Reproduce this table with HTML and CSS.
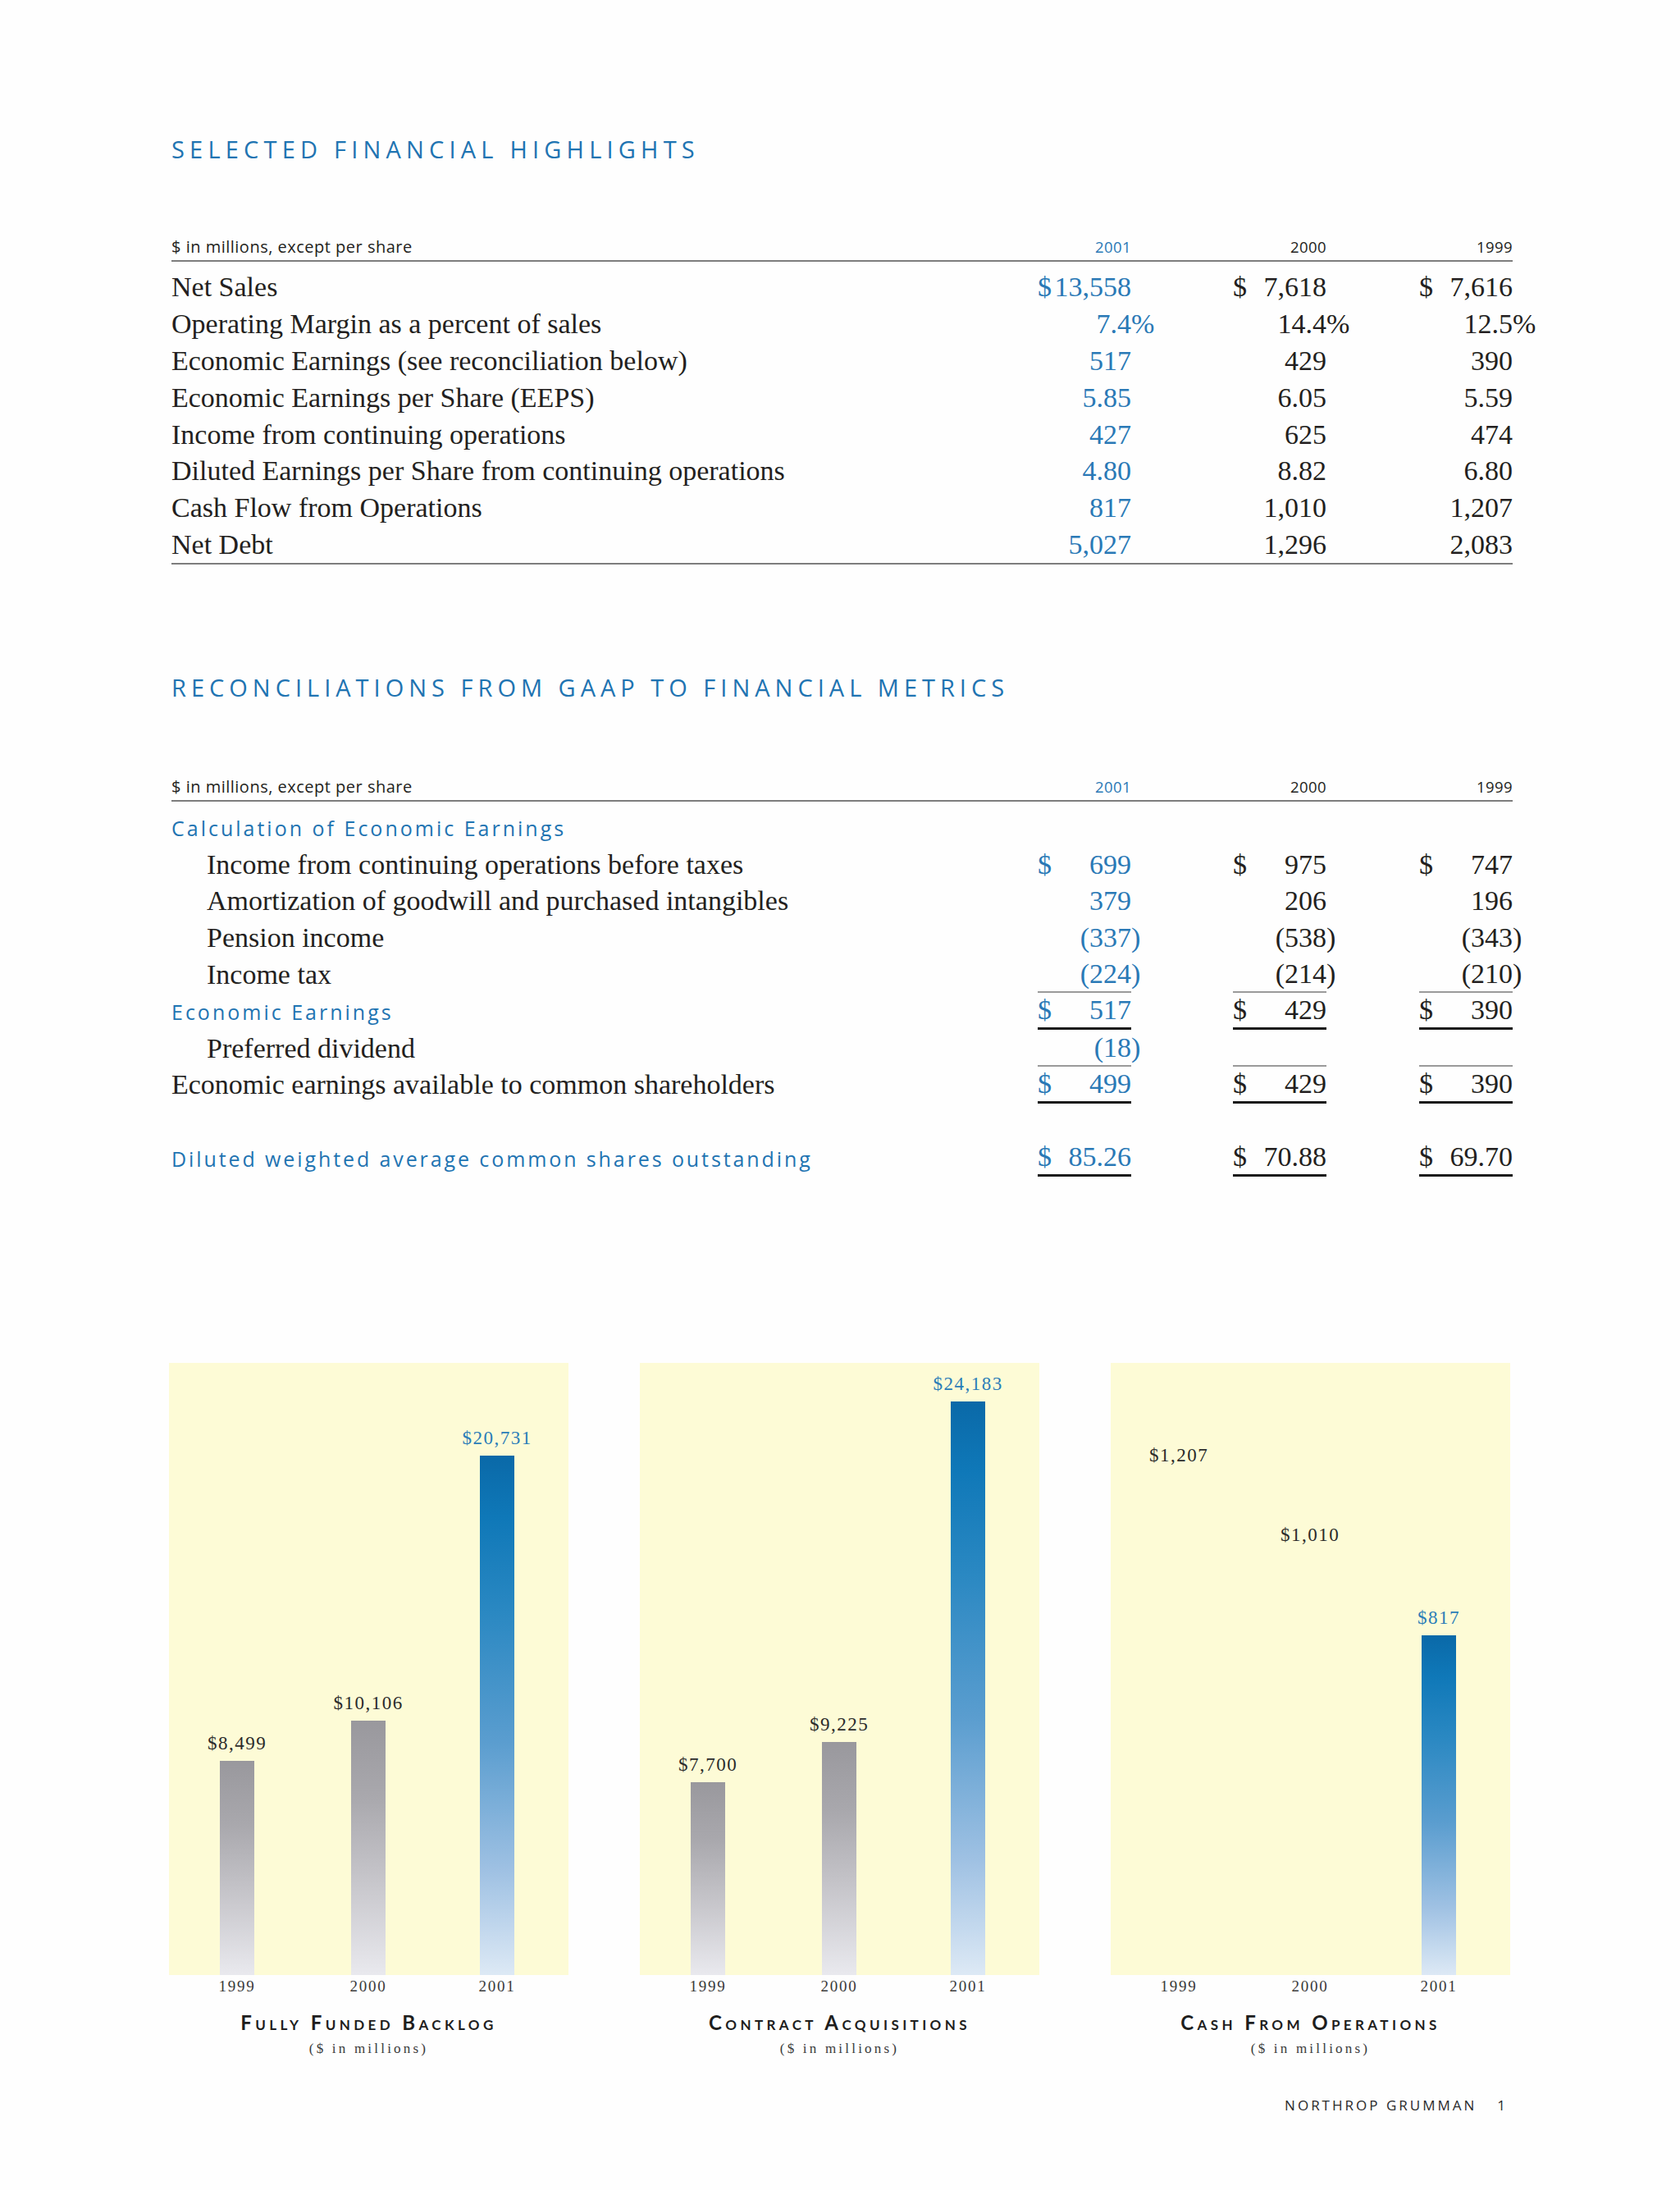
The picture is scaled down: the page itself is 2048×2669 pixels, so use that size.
FILE: index.html
```html
<!DOCTYPE html>
<html lang="en">
<head>
<meta charset="utf-8">
<title>Selected Financial Highlights</title>
<link rel="stylesheet" href="styles.css">
</head>
<body>
<main class="page">
  <h2 class="section-title t1">Selected Financial Highlights</h2>
  <div class="table tbl1">
    <div class="row head">
      <div class="label">$ in millions, except per share</div>
      <div class="val v1 cur">2001</div>
      <div class="val v2">2000</div>
      <div class="val v3">1999</div>
    </div>
    <div class="row">
      <div class="label">Net Sales</div>
      <div class="val v1 cur"><span class="d">$</span><span class="n">13,558</span></div>
      <div class="val v2"><span class="d">$</span><span class="n">7,618</span></div>
      <div class="val v3"><span class="d">$</span><span class="n">7,616</span></div>
    </div>
    <div class="row">
      <div class="label">Operating Margin as a percent of sales</div>
      <div class="val v1 cur"><span class="n">7.4<span class="hang">%</span></span></div>
      <div class="val v2"><span class="n">14.4<span class="hang">%</span></span></div>
      <div class="val v3"><span class="n">12.5<span class="hang">%</span></span></div>
    </div>
    <div class="row">
      <div class="label">Economic Earnings (see reconciliation below)</div>
      <div class="val v1 cur"><span class="n">517</span></div>
      <div class="val v2"><span class="n">429</span></div>
      <div class="val v3"><span class="n">390</span></div>
    </div>
    <div class="row">
      <div class="label">Economic Earnings per Share (EEPS)</div>
      <div class="val v1 cur"><span class="n">5.85</span></div>
      <div class="val v2"><span class="n">6.05</span></div>
      <div class="val v3"><span class="n">5.59</span></div>
    </div>
    <div class="row">
      <div class="label">Income from continuing operations</div>
      <div class="val v1 cur"><span class="n">427</span></div>
      <div class="val v2"><span class="n">625</span></div>
      <div class="val v3"><span class="n">474</span></div>
    </div>
    <div class="row">
      <div class="label">Diluted Earnings per Share from continuing operations</div>
      <div class="val v1 cur"><span class="n">4.80</span></div>
      <div class="val v2"><span class="n">8.82</span></div>
      <div class="val v3"><span class="n">6.80</span></div>
    </div>
    <div class="row">
      <div class="label">Cash Flow from Operations</div>
      <div class="val v1 cur"><span class="n">817</span></div>
      <div class="val v2"><span class="n">1,010</span></div>
      <div class="val v3"><span class="n">1,207</span></div>
    </div>
    <div class="row">
      <div class="label">Net Debt</div>
      <div class="val v1 cur"><span class="n">5,027</span></div>
      <div class="val v2"><span class="n">1,296</span></div>
      <div class="val v3"><span class="n">2,083</span></div>
    </div>
  </div>

  <h2 class="section-title t2">Reconciliations from GAAP to Financial Metrics</h2>
  <div class="table tbl2">
    <div class="row head">
      <div class="label">$ in millions, except per share</div>
      <div class="val v1 cur">2001</div>
      <div class="val v2">2000</div>
      <div class="val v3">1999</div>
    </div>
    <div class="row">
      <div class="label sans">Calculation of Economic Earnings</div>
    </div>
    <div class="row">
      <div class="label indent">Income from continuing operations before taxes</div>
      <div class="val v1 cur"><span class="d">$</span><span class="n">699</span></div>
      <div class="val v2"><span class="d">$</span><span class="n">975</span></div>
      <div class="val v3"><span class="d">$</span><span class="n">747</span></div>
    </div>
    <div class="row">
      <div class="label indent">Amortization of goodwill and purchased intangibles</div>
      <div class="val v1 cur"><span class="n">379</span></div>
      <div class="val v2"><span class="n">206</span></div>
      <div class="val v3"><span class="n">196</span></div>
    </div>
    <div class="row">
      <div class="label indent">Pension income</div>
      <div class="val v1 cur"><span class="n">(337<span class="hang">)</span></span></div>
      <div class="val v2"><span class="n">(538<span class="hang">)</span></span></div>
      <div class="val v3"><span class="n">(343<span class="hang">)</span></span></div>
    </div>
    <div class="row">
      <div class="label indent">Income tax</div>
      <div class="val v1 cur thin"><span class="n">(224<span class="hang">)</span></span></div>
      <div class="val v2 thin"><span class="n">(214<span class="hang">)</span></span></div>
      <div class="val v3 thin"><span class="n">(210<span class="hang">)</span></span></div>
    </div>
    <div class="row">
      <div class="label sans">Economic Earnings</div>
      <div class="val v1 cur thick"><span class="d">$</span><span class="n">517</span></div>
      <div class="val v2 thick"><span class="d">$</span><span class="n">429</span></div>
      <div class="val v3 thick"><span class="d">$</span><span class="n">390</span></div>
    </div>
    <div class="row">
      <div class="label indent">Preferred dividend</div>
      <div class="val v1 cur thin"><span class="n">(18<span class="hang">)</span></span></div>
      <div class="val v2 thin"></div>
      <div class="val v3 thin"></div>
    </div>
    <div class="row">
      <div class="label">Economic earnings available to common shareholders</div>
      <div class="val v1 cur thick"><span class="d">$</span><span class="n">499</span></div>
      <div class="val v2 thick"><span class="d">$</span><span class="n">429</span></div>
      <div class="val v3 thick"><span class="d">$</span><span class="n">390</span></div>
    </div>
    <div class="row spacer"></div>
    <div class="row">
      <div class="label sans wide">Diluted weighted average common shares outstanding</div>
      <div class="val v1 cur thick"><span class="d">$</span><span class="n">85.26</span></div>
      <div class="val v2 thick"><span class="d">$</span><span class="n">70.88</span></div>
      <div class="val v3 thick"><span class="d">$</span><span class="n">69.70</span></div>
    </div>
  </div>

  <section class="charts">
    <figure class="chart">
      <div class="panel">
        <div class="slot"><span class="amt">$8,499</span><div class="bar gray" style="height:261px"></div></div>
        <div class="slot"><span class="amt">$10,106</span><div class="bar gray" style="height:310px"></div></div>
        <div class="slot"><span class="amt cur">$20,731</span><div class="bar blue" style="height:633px"></div></div>
      </div>
      <div class="years"><span>1999</span><span>2000</span><span>2001</span></div>
      <figcaption>
        <div class="ctitle">Fully Funded Backlog</div>
        <div class="csub">($ in millions)</div>
      </figcaption>
    </figure>
    <figure class="chart">
      <div class="panel">
        <div class="slot"><span class="amt">$7,700</span><div class="bar gray" style="height:235px"></div></div>
        <div class="slot"><span class="amt">$9,225</span><div class="bar gray" style="height:284px"></div></div>
        <div class="slot"><span class="amt cur">$24,183</span><div class="bar blue" style="height:699px"></div></div>
      </div>
      <div class="years"><span>1999</span><span>2000</span><span>2001</span></div>
      <figcaption>
        <div class="ctitle">Contract Acquisitions</div>
        <div class="csub">($ in millions)</div>
      </figcaption>
    </figure>
    <figure class="chart">
      <div class="panel">
        <div class="slot"><span class="amt">$1,207</span><div class="bar ghost" style="height:612px"></div></div>
        <div class="slot"><span class="amt">$1,010</span><div class="bar ghost" style="height:515px"></div></div>
        <div class="slot"><span class="amt cur">$817</span><div class="bar blue" style="height:414px"></div></div>
      </div>
      <div class="years"><span>1999</span><span>2000</span><span>2001</span></div>
      <figcaption>
        <div class="ctitle">Cash From Operations</div>
        <div class="csub">($ in millions)</div>
      </figcaption>
    </figure>
  </section>

  <footer class="footer">
    <span class="brand">Northrop Grumman</span>
    <span class="pageno">1</span>
  </footer>
</main>
</body>
</html>
```

FILE: styles.css
```css
html, body {
  margin: 0;
  padding: 0;
}

body {
  width: 2048px;
  min-height: 2669px;
  background: #fefefe;
  color: #231f20;
  font-family: "Liberation Serif", "Times New Roman", serif;
}

.page {
  width: 1635px;
  padding: 162px 0 0 209px;
}

/* Section titles */
.section-title {
  margin: 0;
  height: 40px;
  line-height: 40px;
  font-family: "Open Sans", "Liberation Sans", sans-serif;
  font-weight: 400;
  font-size: 29px;
  letter-spacing: 6.2px;
  text-transform: uppercase;
  color: #1f74b2;
  white-space: nowrap;
}

.t2 {
  margin-top: 130px;
  letter-spacing: 6px;
}

.tbl1 {
  margin-top: 86px;
  border-bottom: 2px solid #7d7d7d;
}

.tbl2 {
  margin-top: 88px;
}

/* Table rows */
.row {
  display: flex;
  height: 44.8px;
  font-size: 34px;
}

.row.head {
  height: auto;
  line-height: 26px;
  padding-bottom: 3px;
  margin-bottom: 9px;
  border-bottom: 2px solid #7d7d7d;
  font-family: "Open Sans", "Liberation Sans", sans-serif;
  font-size: 20px;
  letter-spacing: 0.5px;
}

.row.head .val {
  display: block;
  text-align: right;
  font-size: 18.5px;
  letter-spacing: 0.4px;
}

.row.spacer {
  height: 44.8px;
}

.label {
  flex: 1;
  display: flex;
  align-items: center;
  white-space: nowrap;
}

.label.indent {
  padding-left: 43px;
}

.label.sans {
  font-family: "Open Sans", "Liberation Sans", sans-serif;
  font-size: 25px;
  letter-spacing: 3px;
  color: #1f74b2;
}

.label.sans.wide {
  letter-spacing: 2.9px;
}

.val {
  box-sizing: border-box;
  width: 114px;
  display: flex;
  align-items: center;
  white-space: nowrap;
}

.v2 {
  margin-left: 124px;
}

.v3 {
  margin-left: 113px;
}

.val.cur {
  color: #2a79b6;
}

.val .n {
  margin-left: auto;
}

.hang {
  display: inline-block;
  width: 0;
}

.val.thin {
  border-bottom: 2px solid #9a9a9a;
}

.val.thick {
  border-bottom: 3px solid #1a1a1a;
}

/* Charts */
.charts {
  display: flex;
  gap: 87px;
  margin: 227px 0 0 -3px;
}

.chart {
  margin: 0;
  width: 487px;
}

.panel {
  height: 746px;
  background: #fdfbd6;
  display: grid;
  grid-template-columns: 160px 160px 154px;
  padding-left: 3px;
  align-items: end;
}

.slot {
  display: flex;
  flex-direction: column;
  align-items: center;
}

.amt {
  font-size: 23px;
  line-height: 30px;
  letter-spacing: 1.5px;
  margin-bottom: 6px;
  color: #2b2b2b;
  white-space: nowrap;
}

.amt.cur {
  color: #2a7db8;
}

.bar {
  width: 42px;
}

.bar.gray {
  background: linear-gradient(to bottom, #99989d 0%, #a9a8ad 30%, #c4c3c8 60%, #e9e9ee 100%);
}

.bar.blue {
  background: linear-gradient(to bottom, #0a69a8 0%, #0f78b8 12%, #2a88c2 30%, #5a9dcf 55%, #9fc1e3 80%, #dde9f5 100%);
}

.bar.ghost {
  background: transparent;
}

.years {
  display: grid;
  grid-template-columns: 160px 160px 154px;
  padding-left: 3px;
  line-height: 28px;
  font-size: 19px;
  letter-spacing: 1.8px;
  color: #3a3a3a;
  text-align: center;
}

.chart figcaption {
  text-align: center;
}

.ctitle {
  margin-top: 15px;
  line-height: 30px;
  font-family: "Lato", "Open Sans", sans-serif;
  font-weight: 700;
  font-size: 24px;
  font-variant: small-caps;
  letter-spacing: 4.4px;
  color: #1e1e1e;
}

.csub {
  margin-top: 5px;
  line-height: 24px;
  font-size: 17px;
  letter-spacing: 3.2px;
  color: #3a3a3a;
}

/* Footer */
.footer {
  margin-top: 45px;
  display: flex;
  justify-content: flex-end;
  align-items: center;
  gap: 25px;
  padding-right: 9px;
  line-height: 24px;
  font-family: "Open Sans", "Liberation Sans", sans-serif;
  font-size: 17px;
  color: #2a2a2a;
}

.brand {
  text-transform: uppercase;
  letter-spacing: 3px;
}
```
